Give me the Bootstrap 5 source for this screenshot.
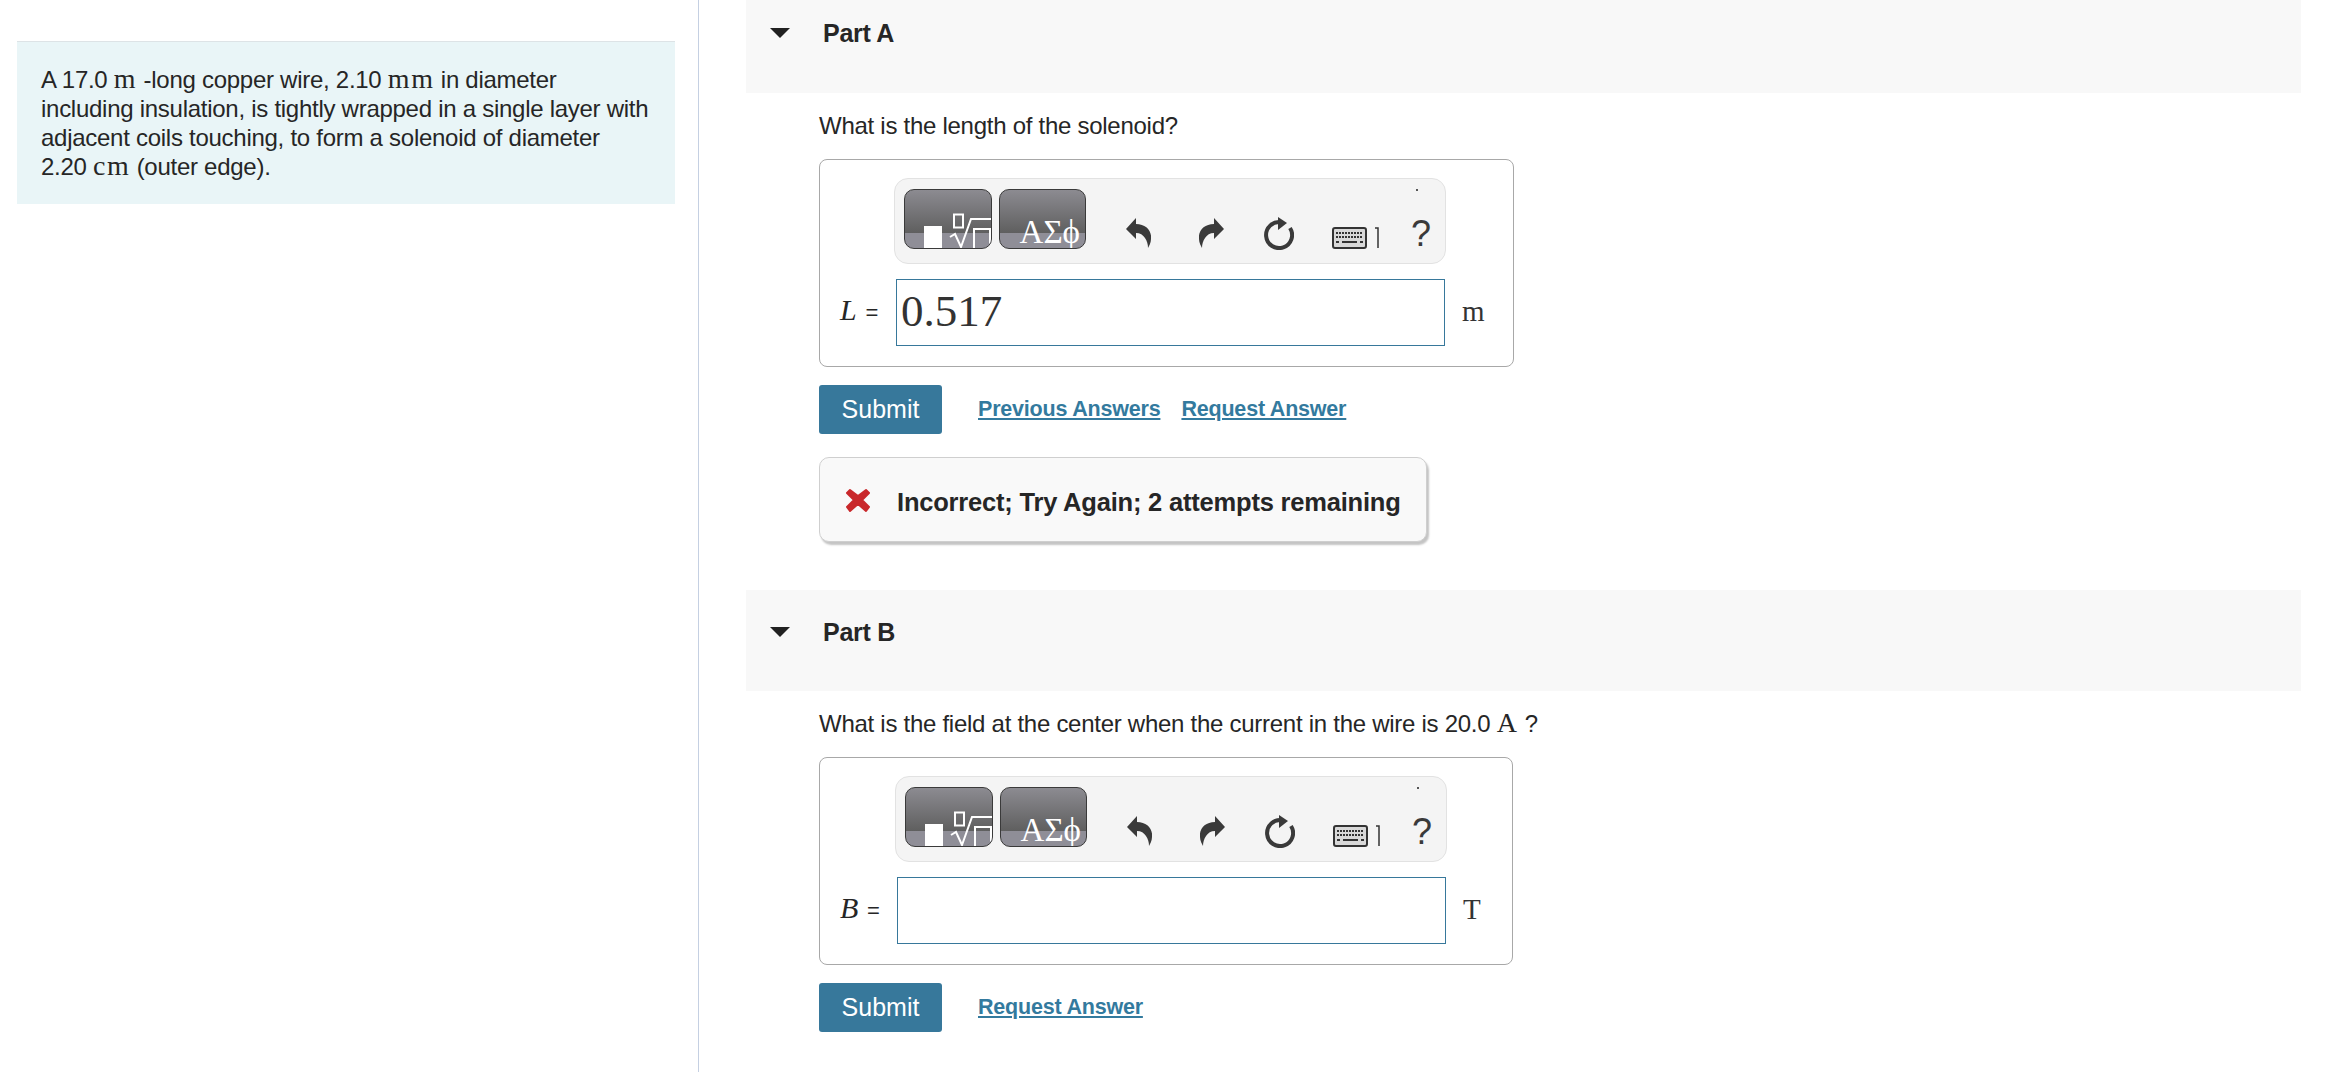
<!DOCTYPE html>
<html lang="en">
<head>
<meta charset="UTF-8">
<title>Solenoid</title>
<link href="https://cdn.jsdelivr.net/npm/bootstrap@5.3.0/dist/css/bootstrap.min.css" rel="stylesheet">
<style>
html, body { height: 100%; overflow: hidden; }
body { font-family: "Liberation Sans", Arial, sans-serif; font-size: 24px; line-height: 29px; letter-spacing: -0.27px; color: #262626; background: #fff; }
.side-col { width: 699px; height: 1072px; border-right: 1px solid #c5d0e2; padding: 41px 23px 0 17px; flex: none; }
.intro-box { background: #e9f5f7; border-top: 1px solid #dde3e6; padding: 23px 24px 22px; height: 163px; white-space: nowrap; }
.mth { font-family: "Liberation Serif", "Times New Roman", serif; font-size: 28px; line-height: 1; letter-spacing: 1.5px; }
.main-col { width: 1555px; margin-left: 47px; margin-top: -9px; flex: none; }
.part-bar { background: #f8f8f8; height: 102px; padding: 28px 0 0 24px; font-weight: 700; font-size: 25px; }
.part-second { margin-top: 48px; height: 101px; }
.caret-down { width: 20px; height: 10px; margin-right: 33px; margin-top: 9px; flex: none; }
.part-body { padding-left: 73px; }
.question { margin: 18px 0 19px; }
.answer-box { width: 695px; height: 208px; border: 1px solid #a8a8a8; border-radius: 8px; padding-top: 18px; }
.tool-bar { width: 552px; height: 86px; margin-left: 74px; background: #f4f4f4; border: 1px solid #e2e2e2; border-radius: 14px; padding: 10px 0 0 9px; }
.pal-btn { height: 60px; border: 1px solid #3a3a3a; border-radius: 10px; overflow: hidden; flex: none; background: linear-gradient(#8c8b91 0%, #5f5f5f 74%, #8f8e97 75%, #8f8e97 100%); }
.pal-sym { width: 88px; margin-right: 7px; }
.pal-greek { width: 87px; color: #fff; font-family: "Liberation Serif", serif; font-size: 33px; line-height: 60px; letter-spacing: 0; text-align: right; padding: 12px 5px 0 0; white-space: nowrap; }
.help-mark { font-size: 36px; color: #3a3a3a; line-height: 36px; letter-spacing: 0; margin-left: 31px; margin-top: 27px; }
.stray-dot { position: absolute; width: 2px; height: 2px; background: #555; right: 27px; top: 10px; }
.input-row { margin-top: 15px; }
.var-label { width: 76px; padding: 0 0 4px 20px; font-size: 22px; white-space: nowrap; flex: none; }
.var-label i { font-family: "Liberation Serif", serif; font-size: 30px; margin-right: 9px; }
.ans-input.form-control { width: 549px; height: 67px; flex: none; border: 1px solid #37789b; border-radius: 0; padding: 0 4px 2px; font-family: "Liberation Serif", serif; font-size: 45px; color: #333; box-shadow: none; }
.unit-txt { font-family: "Liberation Serif", serif; font-size: 29px; margin: 0 0 3px 17px; color: #333; }
.action-row { margin-top: 18px; }
.btn.submit-btn { background: #37789b; border: 0; border-radius: 3px; color: #fff; width: 123px; height: 49px; font-size: 25px; line-height: 49px; letter-spacing: 0; padding: 0; margin-right: 36px; }
.ans-link { font-size: 21.5px; font-weight: 700; letter-spacing: -0.2px; color: #337a9e; text-decoration: underline; margin-right: 21px; }
.feedback-box { width: 608px; height: 85px; margin-top: 23px; border: 1px solid #cfcfcf; border-radius: 10px; background: #f9f9f9; box-shadow: 2px 3px 2px #c4c4c4; padding-left: 25px; font-weight: 700; font-size: 25.5px; letter-spacing: -0.2px; }
.feedback-box svg { margin-right: 26px; flex: none; }
.feedback-box span { margin-top: 6px; }
.part-shift .answer-box { width: 694px; }
.part-shift .tool-bar { margin-left: 75px; }
.part-shift .var-label { width: 77px; }
.icon-undo { margin: 29px 0 0 40px; flex: none; }
.icon-redo { margin: 29px 0 0 48px; flex: none; }
.icon-reload { margin: 28px 0 0 40px; flex: none; }
.icon-keys { margin: 38px 0 0 38px; flex: none; }
</style>
</head>
<body>
<div class="d-flex">
  <div class="side-col">
    <div class="intro-box">A 17.0 <span class="mth">m</span> -long copper wire, 2.10 <span class="mth">mm</span> in diameter<br>including insulation, is tightly wrapped in a single layer with<br>adjacent coils touching, to form a solenoid of diameter<br>2.20 <span class="mth">cm</span> (outer edge).</div>
  </div>
  <div class="main-col">

    <div class="part-bar d-flex">
      <svg class="caret-down" viewBox="0 0 20 10"><path d="M0 0H20L10 10Z" fill="#212121"/></svg>
      <span>Part A</span>
    </div>
    <div class="part-body">
      <p class="question">What is the length of the solenoid?</p>
      <div class="answer-box">
        <div class="tool-bar d-flex position-relative">
          <div class="pal-btn pal-sym">
            <svg width="88" height="60" viewBox="0 0 88 60"><rect x="19" y="36" width="18" height="24" fill="#fff"/><path d="M49 24.500h9v13h-9zM45 47l5-3 6 13 10-28h22M69 60V39h16v21" fill="none" stroke="#fff" stroke-width="2"/></svg>
          </div>
          <div class="pal-btn pal-greek">ΑΣϕ</div>
          <svg class="icon-undo" width="25" height="30" viewBox="0 0 25 30"><path d="M0 11 10 0V6C20 6 26 13 25 21 25 25 23 28 22 30 22 23 18 15 10 15V21Z" fill="#3a3a3a"/></svg>
          <svg class="icon-redo" width="25" height="30" viewBox="0 0 25 30"><path d="M25 11 15 0V6C5 6-1 13 0 21 0 25 2 28 3 30 3 23 7 15 15 15V21Z" fill="#3a3a3a"/></svg>
          <svg class="icon-reload" width="30" height="33" viewBox="0 0 30 33"><path d="M17 5.200A13 13 0 1 0 26 11" fill="none" stroke="#3a3a3a" stroke-width="4"/><path d="M14 0 23 6 14 13Z" fill="#3a3a3a"/></svg>
          <svg class="icon-keys" width="48" height="22" viewBox="0 0 48 22"><rect x="1" y="1" width="33" height="20" rx="2" fill="#d8d8d8" stroke="#333" stroke-width="2"/><path d="M4 6H31M4 10H31" stroke="#333" stroke-width="2" stroke-dasharray="2 1"/><path d="M4 15H7M10 15H25M28 15H31" stroke="#333" stroke-width="2"/><path d="M43 1H46V21" fill="none" stroke="#333" stroke-width="1.500"/></svg>
          <span class="help-mark">?</span>
          <span class="stray-dot"></span>
        </div>
        <div class="input-row d-flex align-items-center">
          <span class="var-label"><i>L</i>=</span>
          <input class="ans-input form-control" type="text" value="0.517" aria-label="L">
          <span class="unit-txt">m</span>
        </div>
      </div>
      <div class="action-row d-flex align-items-center">
        <button type="button" class="btn submit-btn">Submit</button>
        <a href="#" class="ans-link">Previous Answers</a>
        <a href="#" class="ans-link">Request Answer</a>
      </div>
      <div class="feedback-box d-flex align-items-center">
        <svg width="26" height="26" viewBox="0 0 26 26"><path d="M5 3 13 9 21 3 24 6 17 13 24 20 21 24 13 17 5 24 2 20 9 13 2 6Z" fill="#c9282b" stroke="#c9282b" stroke-width="2" stroke-linejoin="round"/></svg>
        <span>Incorrect; Try Again; 2 attempts remaining</span>
      </div>
    </div>

    <div class="part-bar part-second d-flex">
      <svg class="caret-down" viewBox="0 0 20 10"><path d="M0 0H20L10 10Z" fill="#212121"/></svg>
      <span>Part B</span>
    </div>
    <div class="part-body part-shift">
      <p class="question">What is the field at the center when the current in the wire is 20.0 <span class="mth">A</span> ?</p>
      <div class="answer-box">
        <div class="tool-bar d-flex position-relative">
          <div class="pal-btn pal-sym">
            <svg width="88" height="60" viewBox="0 0 88 60"><rect x="19" y="36" width="18" height="24" fill="#fff"/><path d="M49 24.500h9v13h-9zM45 47l5-3 6 13 10-28h22M69 60V39h16v21" fill="none" stroke="#fff" stroke-width="2"/></svg>
          </div>
          <div class="pal-btn pal-greek">ΑΣϕ</div>
          <svg class="icon-undo" width="25" height="30" viewBox="0 0 25 30"><path d="M0 11 10 0V6C20 6 26 13 25 21 25 25 23 28 22 30 22 23 18 15 10 15V21Z" fill="#3a3a3a"/></svg>
          <svg class="icon-redo" width="25" height="30" viewBox="0 0 25 30"><path d="M25 11 15 0V6C5 6-1 13 0 21 0 25 2 28 3 30 3 23 7 15 15 15V21Z" fill="#3a3a3a"/></svg>
          <svg class="icon-reload" width="30" height="33" viewBox="0 0 30 33"><path d="M17 5.200A13 13 0 1 0 26 11" fill="none" stroke="#3a3a3a" stroke-width="4"/><path d="M14 0 23 6 14 13Z" fill="#3a3a3a"/></svg>
          <svg class="icon-keys" width="48" height="22" viewBox="0 0 48 22"><rect x="1" y="1" width="33" height="20" rx="2" fill="#d8d8d8" stroke="#333" stroke-width="2"/><path d="M4 6H31M4 10H31" stroke="#333" stroke-width="2" stroke-dasharray="2 1"/><path d="M4 15H7M10 15H25M28 15H31" stroke="#333" stroke-width="2"/><path d="M43 1H46V21" fill="none" stroke="#333" stroke-width="1.500"/></svg>
          <span class="help-mark">?</span>
          <span class="stray-dot"></span>
        </div>
        <div class="input-row d-flex align-items-center">
          <span class="var-label"><i>B</i>=</span>
          <input class="ans-input form-control" type="text" aria-label="B">
          <span class="unit-txt">T</span>
        </div>
      </div>
      <div class="action-row d-flex align-items-center">
        <button type="button" class="btn submit-btn">Submit</button>
        <a href="#" class="ans-link">Request Answer</a>
      </div>
    </div>

  </div>
</div>
<script src="https://cdn.jsdelivr.net/npm/bootstrap@5.3.0/dist/js/bootstrap.bundle.min.js"></script>
</body>
</html>
